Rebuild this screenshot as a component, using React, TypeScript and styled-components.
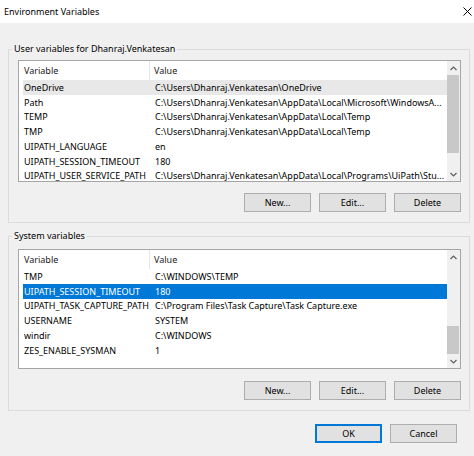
import styled, { createGlobalStyle } from 'styled-components'

const GlobalStyle = createGlobalStyle`
    html, body {
        margin: 0;
        padding: 0;
        background: #f0f0f0;
    }
    body {
        font-family: "Noto Sans", "Open Sans", sans-serif;
        font-size: 9px;
        color: #000;
    }
`

const Window = styled.div`
    width: 474px;
    height: 456px;
    display: flex;
    flex-direction: column;
    background: #f0f0f0;
    overflow: hidden;
`

const TitleBar = styled.div`
    height: 23px;
    flex: none;
    background: #fff;
    display: flex;
    align-items: center;
    justify-content: space-between;
    padding: 0 2px 0 4px;
    box-sizing: border-box;
`

const TitleText = styled.span`
    font-size: 9px;
`

const CloseIcon = styled.svg`
    width: 9px;
    height: 9px;
    margin-top: -1px;
`

const Group = styled.fieldset<{ $top: number; $padTop: number; $padBottom: number }>`
    margin: ${p => p.$top}px 0 0 8px;
    width: 462px;
    box-sizing: border-box;
    border: 1px solid #dcdcdc;
    padding: ${p => p.$padTop}px 8px ${p => p.$padBottom}px 9px;
    min-inline-size: 0;
`

const Legend = styled.legend`
    margin-left: -6px;
    padding: 0 2px;
    line-height: 14px;
    font-size: 9px;
`

const ListView = styled.div<{ $height: number }>`
    height: ${p => p.$height}px;
    border: 1px solid #a6a6a6;
    background: #fff;
    display: flex;
    box-sizing: border-box;
    overflow: hidden;
`

const ListBody = styled.div`
    flex: 1;
    min-width: 0;
    overflow: hidden;
`

const Header = styled.div`
    height: 19px;
    display: flex;
    align-items: center;
`

const HeaderCell = styled.div<{ $first?: boolean }>`
    height: 100%;
    display: flex;
    align-items: center;
    box-sizing: border-box;
    padding-left: ${p => (p.$first ? 5 : 4)}px;
    width: ${p => (p.$first ? '131px' : 'auto')};
    border-right: ${p => (p.$first ? '1px solid #e5e5e5' : 'none')};
    color: #1a1a1a;
`

const Row = styled.div<{ $state?: 'focus' | 'blur' }>`
    height: 14.75px;
    margin-left: 4px;
    display: flex;
    align-items: center;
    white-space: nowrap;
    background: ${p => (p.$state === 'focus' ? '#0078d7' : p.$state === 'blur' ? '#e8e8e8' : 'transparent')};
    color: ${p => (p.$state === 'focus' ? '#fff' : '#000')};
`

const NameCell = styled.div`
    width: 128px;
    flex: none;
    padding-left: 1px;
    box-sizing: border-box;
    overflow: hidden;
`

const ValueCell = styled.div`
    flex: 1;
    padding-left: 4px;
    overflow: hidden;
`

const ScrollBar = styled.div`
    width: 13px;
    flex: none;
    background: #f0f0f0;
    display: flex;
    flex-direction: column;
`

const ScrollArrow = styled.div`
    height: 14px;
    flex: none;
    display: flex;
    align-items: center;
    justify-content: center;
`

const Track = styled.div`
    flex: 1;
    display: flex;
    flex-direction: column;
    padding: 0 1px 0 0;
`

const Thumb = styled.div<{ $offset: number; $size: number }>`
    margin-top: ${p => p.$offset}px;
    height: ${p => p.$size}px;
    background: #c8c8c8;
`

const ButtonRow = styled.div<{ $top: number; $right?: number }>`
    display: flex;
    justify-content: flex-end;
    gap: 8px;
    margin-top: ${p => p.$top}px;
    padding-right: ${p => p.$right ?? 0}px;
`

const Button = styled.button<{ $default?: boolean }>`
    width: 67px;
    height: 19px;
    padding: 0;
    font-family: inherit;
    font-size: 9px;
    color: #000;
    background: #e1e1e1;
    border: 1px solid ${p => (p.$default ? '#0078d7' : '#adadad')};
    box-shadow: ${p => (p.$default ? 'inset 0 0 0 1px #0078d7' : 'none')};
    border-radius: 0;
`

const Chevron = ({ up }: { up?: boolean }) => (
    <svg width="7" height="5" viewBox="0 0 7 5">
        <polyline
            points={up ? '0.5,4 3.5,1 6.5,4' : '0.5,1 3.5,4 6.5,1'}
            fill="none"
            stroke="#606060"
            strokeWidth="1.2"
        />
    </svg>
)

type Variable = { name: string; value: string; state?: 'focus' | 'blur' }

const userVars: Variable[] = [
    { name: 'OneDrive', value: 'C:\\Users\\Dhanraj.Venkatesan\\OneDrive', state: 'blur' },
    { name: 'Path', value: 'C:\\Users\\Dhanraj.Venkatesan\\AppData\\Local\\Microsoft\\WindowsA...' },
    { name: 'TEMP', value: 'C:\\Users\\Dhanraj.Venkatesan\\AppData\\Local\\Temp' },
    { name: 'TMP', value: 'C:\\Users\\Dhanraj.Venkatesan\\AppData\\Local\\Temp' },
    { name: 'UIPATH_LANGUAGE', value: 'en' },
    { name: 'UIPATH_SESSION_TIMEOUT', value: '180' },
    { name: 'UIPATH_USER_SERVICE_PATH', value: 'C:\\Users\\Dhanraj.Venkatesan\\AppData\\Local\\Programs\\UiPath\\Stu...' },
]

const systemVars: Variable[] = [
    { name: 'TMP', value: 'C:\\WINDOWS\\TEMP' },
    { name: 'UIPATH_SESSION_TIMEOUT', value: '180', state: 'focus' },
    { name: 'UIPATH_TASK_CAPTURE_PATH', value: 'C:\\Program Files\\Task Capture\\Task Capture.exe' },
    { name: 'USERNAME', value: 'SYSTEM' },
    { name: 'windir', value: 'C:\\WINDOWS' },
    { name: 'ZES_ENABLE_SYSMAN', value: '1' },
]

const VariableList = ({ rows, height, thumbOffset, thumbSize }: {
    rows: Variable[]
    height: number
    thumbOffset: number
    thumbSize: number
}) => (
    <ListView $height={height}>
        <ListBody>
            <Header>
                <HeaderCell $first>Variable</HeaderCell>
                <HeaderCell>Value</HeaderCell>
            </Header>
            {rows.map(r => (
                <Row key={r.name} $state={r.state}>
                    <NameCell>{r.name}</NameCell>
                    <ValueCell>{r.value}</ValueCell>
                </Row>
            ))}
        </ListBody>
        <ScrollBar>
            <ScrollArrow><Chevron up /></ScrollArrow>
            <Track>
                <Thumb $offset={thumbOffset} $size={thumbSize} />
            </Track>
            <ScrollArrow><Chevron /></ScrollArrow>
        </ScrollBar>
    </ListView>
)

const Actions = ({ top }: { top: number }) => (
    <ButtonRow $top={top}>
        <Button>New...</Button>
        <Button>Edit...</Button>
        <Button>Delete</Button>
    </ButtonRow>
)

const App = () => {
    return <>
        <GlobalStyle />
        <Window>
            <TitleBar>
                <TitleText>Environment Variables</TitleText>
                <CloseIcon viewBox="0 0 9 9">
                    <path d="M0.5 0.5 L8.5 8.5 M8.5 0.5 L0.5 8.5" stroke="#000" strokeWidth="1" />
                </CloseIcon>
            </TitleBar>

            <Group $top={19} $padTop={4} $padBottom={10}>
                <Legend>User variables for Dhanraj.Venkatesan</Legend>
                <VariableList rows={userVars} height={122} thumbOffset={0} thumbSize={78} />
                <Actions top={11} />
            </Group>

            <Group $top={6} $padTop={6} $padBottom={10}>
                <Legend>System variables</Legend>
                <VariableList rows={systemVars} height={120} thumbOffset={62} thumbSize={28} />
                <Actions top={12} />
            </Group>

            <ButtonRow $top={13} $right={17}>
                <Button $default>OK</Button>
                <Button>Cancel</Button>
            </ButtonRow>
        </Window>
    </>
}

export default App
